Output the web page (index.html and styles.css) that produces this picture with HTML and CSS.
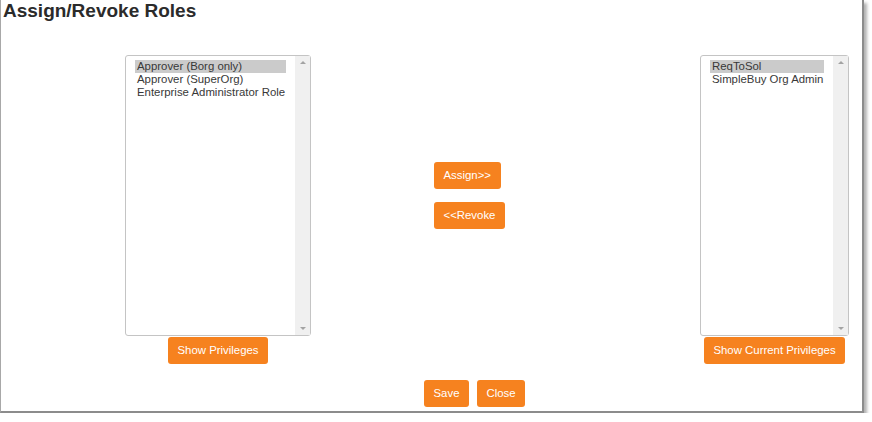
FILE: index.html
```html
<!DOCTYPE html>
<html>
<head>
<meta charset="utf-8">
<link rel="stylesheet" href="styles.css">
</head>
<body>
<div class="frame">
  <h1 class="title">Assign/Revoke Roles</h1>
  <div class="main">
    <div class="col col-left">
      <div class="listbox">
        <div class="options">
          <div class="opt sel">Approver (Borg only)</div>
          <div class="opt">Approver (SuperOrg)</div>
          <div class="opt">Enterprise Administrator Role</div>
        </div>
        <div class="scroll"><span class="arr up"></span><span class="arr down"></span></div>
      </div>
      <button class="btn btn-under">Show Privileges</button>
    </div>
    <div class="col-mid">
      <button class="btn">Assign&gt;&gt;</button>
      <button class="btn">&lt;&lt;Revoke</button>
    </div>
    <div class="col col-right">
      <div class="listbox">
        <div class="options">
          <div class="opt sel">ReqToSol</div>
          <div class="opt">SimpleBuy Org Admin</div>
        </div>
        <div class="scroll"><span class="arr up"></span><span class="arr down"></span></div>
      </div>
      <button class="btn btn-under">Show Current Privileges</button>
    </div>
  </div>
  <div class="footer">
    <button class="btn">Save</button>
    <button class="btn">Close</button>
  </div>
</div>
</body>
</html>
```

FILE: styles.css
```css
html, body {
  margin: 0;
  padding: 0;
  background: #ffffff;
}
body {
  font-family: "Liberation Sans", Arial, sans-serif;
  color: #333333;
}
.frame {
  width: 861px;
  height: 411px;
  border-left: 1px solid #a8a8a8;
  border-right: 2px solid #8c8c8c;
  border-bottom: 2px solid #8c8c8c;
  box-shadow: 3px 3px 3px rgba(0, 0, 0, 0.3);
  background: #fff;
  display: flex;
  flex-direction: column;
}
.title {
  margin: 0;
  padding: 0 0 0 2px;
  font-size: 19px;
  font-weight: 700;
  line-height: 22px;
  color: #2b2b2b;
}
.main {
  display: flex;
  margin-top: 33px;
  padding-left: 124px;
}
.col {
  display: flex;
  flex-direction: column;
  align-items: center;
}
.col-left { width: 186px; }
.col-right {
  width: 149px;
  margin-left: auto;
  margin-right: 13px;
}
.listbox {
  box-sizing: border-box;
  width: 100%;
  height: 281px;
  border: 1px solid #c4c4c4;
  border-radius: 3px;
  display: flex;
  background: #fff;
}
.options {
  flex: 1;
  padding: 4px 9px;
}
.opt {
  font-size: 11.4px;
  line-height: 13px;
  padding-left: 2px;
  color: #383838;
  white-space: nowrap;
}
.opt.sel { background: #cbcbcb; }
.scroll {
  width: 15px;
  background: #f0f0f0;
  display: flex;
  flex-direction: column;
  justify-content: space-between;
  align-items: center;
  padding: 5px 0;
  box-sizing: border-box;
}
.arr {
  width: 0;
  height: 0;
  border-left: 3px solid transparent;
  border-right: 3px solid transparent;
}
.arr.up { border-bottom: 3px solid #a3a3a3; }
.arr.down { border-top: 3px solid #a3a3a3; }
.btn {
  font-family: "Liberation Sans", Arial, sans-serif;
  font-size: 11.4px;
  color: #ffffff;
  background: #f6821f;
  border: none;
  border-radius: 3px;
  height: 27px;
  padding: 0 9.5px;
  line-height: 27px;
  cursor: pointer;
  white-space: nowrap;
}
.btn-under { margin-top: 1px; }
.col-mid {
  height: 281px;
  margin-left: 123px;
  display: flex;
  flex-direction: column;
  justify-content: center;
  align-items: flex-start;
  gap: 13px;
}
.footer {
  display: flex;
  gap: 8px;
  padding-left: 423px;
  margin-top: 16px;
}
```
